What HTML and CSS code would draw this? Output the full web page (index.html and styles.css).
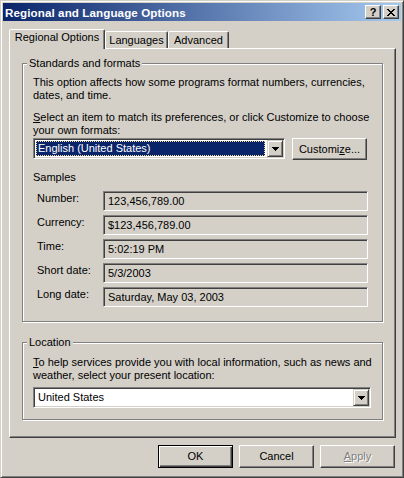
FILE: index.html
```html
<!DOCTYPE html>
<html>
<head>
<meta charset="utf-8">
<title>Regional and Language Options</title>
<link rel="stylesheet" href="styles.css">
</head>
<body>
<div class="window">
  <div class="titlebar">
    <span class="title">Regional and Language Options</span>
    <div class="tb-buttons">
      <span class="tb-btn help">?</span>
      <span class="tb-btn close">
        <svg width="8" height="7" viewBox="0 0 8 7" shape-rendering="crispEdges"><path d="M0 0h2v1H0z M6 0h2v1H6z M1 1h2v1H1z M5 1h2v1H5z M2 2h4v1H2z M3 3h2v1H3z M2 4h4v1H2z M1 5h2v1H1z M5 5h2v1H5z M0 6h2v1H0z M6 6h2v1H6z" fill="#000"/></svg>
      </span>
    </div>
  </div>
  <div class="body">
    <div class="tabs">
      <div class="tab active tab-regional">Regional Options</div>
      <div class="tab tab-languages">Languages</div>
      <div class="tab tab-advanced">Advanced</div>
    </div>
    <div class="panel">
      <div class="group g1">
        <span class="legend">Standards and formats</span>
        <p>This option affects how some programs format numbers, currencies,<br>dates, and time.</p>
        <p class="p2"><u>S</u>elect an item to match its preferences, or click Customize to choose<br>your own formats:</p>
        <div class="select-row">
          <div class="combo combo-fmt">
            <div class="combo-sel"><span>English (United States)</span></div>
            <div class="drop"><svg width="7" height="4" viewBox="0 0 7 4" shape-rendering="crispEdges"><path d="M0 0h7v1H0z M1 1h5v1H1z M2 2h3v1H2z M3 3h1v1H3z" fill="#000"/></svg></div>
          </div>
          <button class="btn btn-customize">Customi<u>z</u>e...</button>
        </div>
        <div class="samples-label">Samples</div>
        <div class="samples">
          <div class="row"><span class="lbl">Number:</span><div class="field">123,456,789.00</div></div>
          <div class="row"><span class="lbl">Currency:</span><div class="field">$123,456,789.00</div></div>
          <div class="row"><span class="lbl">Time:</span><div class="field">5:02:19 PM</div></div>
          <div class="row"><span class="lbl">Short date:</span><div class="field">5/3/2003</div></div>
          <div class="row"><span class="lbl">Long date:</span><div class="field">Saturday, May 03, 2003</div></div>
        </div>
      </div>
      <div class="group g2">
        <span class="legend">Location</span>
        <p><u>T</u>o help services provide you with local information, such as news and<br>weather, select your present location:</p>
        <div class="combo combo-loc">
          <div class="combo-text">United States</div>
          <div class="drop"><svg width="7" height="4" viewBox="0 0 7 4" shape-rendering="crispEdges"><path d="M0 0h7v1H0z M1 1h5v1H1z M2 2h3v1H2z M3 3h1v1H3z" fill="#000"/></svg></div>
        </div>
      </div>
    </div>
    <div class="buttons">
      <button class="btn btn-default">OK</button>
      <button class="btn">Cancel</button>
      <button class="btn btn-disabled"><u>A</u>pply</button>
    </div>
  </div>
</div>
</body>
</html>
```
FILE: styles.css
```css
* { box-sizing: border-box; }
html, body { margin: 0; padding: 0; background: #D4D0C8; }
body {
  font-family: "Liberation Sans", Arial, sans-serif;
  font-size: 11px;
  line-height: 13px;
  color: #000;
}
p { margin: 0; }
u { text-decoration: underline; text-underline-offset: 1px; }

.window {
  width: 404px;
  height: 478px;
  background: #D4D0C8;
  border: 1px solid;
  border-color: #D4D0C8 #404040 #404040 #D4D0C8;
  box-shadow: inset 1px 1px #fff, inset -1px -1px #808080;
  padding: 2px;
  display: flex;
  flex-direction: column;
}

.titlebar {
  height: 18px;
  flex: none;
  background: linear-gradient(to right, #0A246A, #A6CAF0);
  display: flex;
  align-items: center;
  justify-content: space-between;
  padding: 0 2px 0 2px;
}
.title { color: #fff; font-weight: bold; font-size: 11.6px; letter-spacing: 0.1px; }
.tb-buttons { display: flex; gap: 2px; }
.tb-btn {
  width: 16px;
  height: 14px;
  background: #D4D0C8;
  border: 1px solid;
  border-color: #fff #404040 #404040 #fff;
  box-shadow: inset -1px -1px #808080;
  display: flex;
  align-items: center;
  justify-content: center;
  font-weight: bold;
  font-size: 11px;
  line-height: 11px;
}
.tb-btn svg { display: block; }

.body {
  flex: 1;
  display: flex;
  flex-direction: column;
  padding: 8px 5px 0 6px;
}

.tabs {
  display: flex;
  align-items: flex-end;
  height: 19px;
  flex: none;
}
.tab {
  height: 17px;
  background: #D4D0C8;
  border: 1px solid;
  border-bottom: none;
  border-color: #fff #404040 transparent #fff;
  box-shadow: inset -1px 0 #808080;
  border-radius: 2px 2px 0 0;
  text-align: center;
  padding-top: 2px;
  white-space: nowrap;
}
.tab.active {
  height: 20px;
  margin-bottom: -1px;
  position: relative;
  z-index: 1;
  padding-top: 1px;
}
.tab-regional { width: 96px; }
.tab-languages { width: 63px; }
.tab-advanced { width: 61px; }

.panel {
  height: 390px;
  flex: none;
  border: 1px solid;
  border-color: #fff #404040 #404040 #fff;
  box-shadow: inset -1px -1px #808080;
  padding: 14px 0 0 12px;
}

.group {
  position: relative;
  width: 361px;
  border: 1px solid #808080;
  box-shadow: inset 1px 1px #fff, 1px 1px #fff;
  padding: 12px 10px 0 10px;
}
.g1 { height: 259px; }
.g2 { height: 78px; margin-top: 20px; padding-top: 13px; }
.legend {
  position: absolute;
  top: -7px;
  left: 4px;
  padding: 0 2px;
  background: #D4D0C8;
  white-space: nowrap;
}
.p2 { margin-top: 9px; }

.select-row {
  display: flex;
  align-items: flex-start;
  gap: 7px;
  margin-top: 1px;
}

.combo {
  height: 21px;
  background: #fff;
  border: 1px solid;
  border-color: #808080 #fff #fff #808080;
  box-shadow: inset 1px 1px #404040, inset -1px -1px #D4D0C8;
  padding: 1px;
  display: flex;
}
.combo-fmt { width: 252px; }
.combo-loc { width: 338px; margin-top: 5px; }
.combo-sel {
  flex: 1;
  margin: 1px 2px 1px 1px;
  background: #0A246A;
  color: #fff;
  border: 1px dotted #F5DB95;
  padding-left: 1px;
  white-space: nowrap;
  overflow: hidden;
}
.combo-text {
  flex: 1;
  padding: 2px 0 0 3px;
  white-space: nowrap;
}
.drop {
  width: 16px;
  height: 17px;
  flex: none;
  background: #D4D0C8;
  border: 1px solid;
  border-color: #D4D0C8 #404040 #404040 #D4D0C8;
  box-shadow: inset 1px 1px #fff, inset -1px -1px #808080;
  display: flex;
  align-items: center;
  justify-content: center;
}
.drop svg { display: block; }

.btn {
  width: 75px;
  height: 23px;
  flex: none;
  font: inherit;
  color: #000;
  background: #D4D0C8;
  border: 1px solid;
  border-color: #fff #404040 #404040 #fff;
  box-shadow: inset -1px -1px #808080;
  padding: 0;
  margin: 0;
  text-align: center;
}
.btn-customize { height: 22px; }
.btn-default {
  border-color: #000;
  box-shadow: inset 1px 1px #fff, inset -1px -1px #404040, inset -2px -2px #808080;
}
.btn-disabled {
  color: #808080;
  text-shadow: 1px 1px #fff;
}

.samples-label { margin-top: 11px; }
.samples {
  display: flex;
  flex-direction: column;
  gap: 4px;
  margin-top: 7px;
}
.row {
  display: flex;
  align-items: flex-start;
  padding-left: 4px;
}
.lbl {
  width: 66px;
  flex: none;
  padding-top: 1px;
}
.field {
  width: 265px;
  height: 20px;
  border: 1px solid;
  border-color: #808080 #fff #fff #808080;
  box-shadow: inset 1px 1px #404040, inset -1px -1px #D4D0C8;
  padding: 3px 4px 0 4px;
  white-space: nowrap;
}

.buttons {
  display: flex;
  justify-content: flex-end;
  gap: 6px;
  margin-top: 7px;
  padding-right: 1px;
}
```
